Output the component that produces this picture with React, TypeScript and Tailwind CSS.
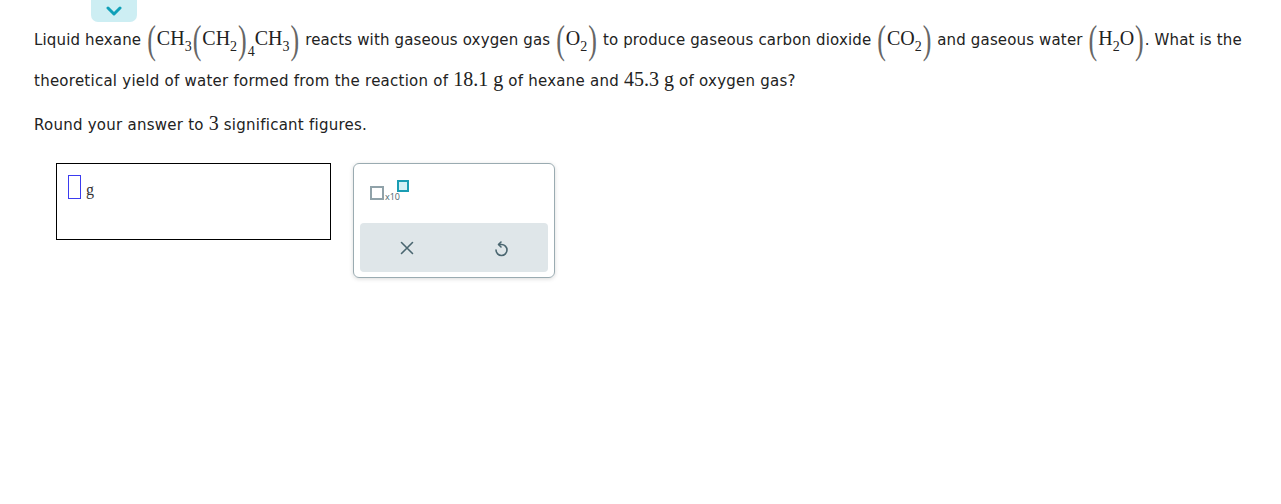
import React from "react";

const serif = { fontFamily: '"Liberation Serif", "Times New Roman", serif' };

function Paren({ ch }: { ch: string }) {
  return (
    <span
      className="inline-block text-[26px] text-[#666] scale-y-[1.5] align-[-4px] leading-none mx-[1px] tracking-normal"
      style={serif}
    >
      {ch}
    </span>
  );
}

function Sub({ c, big }: { c: string; big?: boolean }) {
  return (
    <span className={`text-[14px] relative ${big ? "top-[11px]" : "top-[6px]"}`}>{c}</span>
  );
}

function M({ children }: { children: React.ReactNode }) {
  return (
    <span className="text-[20px] text-[#222] tracking-normal" style={serif}>
      {children}
    </span>
  );
}

export default function App() {
  return (
    <div
      className="relative w-[1281px] h-[504px] bg-white text-[#222]"
      style={{ fontFamily: '"DejaVu Sans", Verdana, sans-serif' }}
    >
      <div className="absolute left-[91px] top-0 w-[46px] h-[22px] bg-[#cdeef3] rounded-b-[7px] flex items-center justify-center">
        <svg width="16" height="10" viewBox="0 0 16 10">
          <path d="M2 2 L8 8 L14 2" fill="none" stroke="#0fa0b8" strokeWidth="3" strokeLinecap="round" strokeLinejoin="round" />
        </svg>
      </div>

      <div className="pl-[34px] pt-[19px] pr-[10px] text-[15px] whitespace-nowrap">
        <p className="leading-[38px] tracking-[0.25px]">
          <span className="tracking-[0.15px]">
            Liquid hexane <Paren ch="(" />
            <M>
              CH<Sub c="3" />
            </M>
            <Paren ch="(" />
            <M>
              CH<Sub c="2" />
            </M>
            <Paren ch=")" />
            <M>
              <Sub c="4" big />
              CH<Sub c="3" />
            </M>
            <Paren ch=")" /> reacts with gaseous oxygen gas <Paren ch="(" />
            <M>
              O<Sub c="2" />
            </M>
            <Paren ch=")" /> to produce gaseous carbon dioxide <Paren ch="(" />
            <M>
              CO<Sub c="2" />
            </M>
            <Paren ch=")" /> and gaseous water <Paren ch="(" />
            <M>
              H<Sub c="2" />O
            </M>
            <Paren ch=")" />. What is the
          </span>
          <br />
          theoretical yield of water formed from the reaction of <M>18.1 g</M> of hexane and{" "}
          <M>45.3 g</M> of oxygen gas?
        </p>
        <p className="mt-[4px] leading-[38px] tracking-[0.25px]">
          Round your answer to <M>3</M> significant figures.
        </p>

        <div className="mt-[19px] ml-[22px] flex items-start gap-[22px]">
          <div className="w-[275px] h-[77px] border border-black pl-[11px] pt-[11px] flex items-start">
            <div className="w-[13px] h-[24px] border-[1.5px] border-[#3b3bf0]" />
            <span className="ml-[5px] mt-[3px] text-[16px] text-[#333]" style={serif}>
              g
            </span>
          </div>

          <div className="w-[202px] h-[115px] border border-[#9aabb1] rounded-[6px] shadow-[0_1px_4px_rgba(0,0,0,0.15)] px-[6px] pt-[16px] pb-[5px] flex flex-col">
            <div className="pl-[10px] h-[43px]">
              <div className="relative w-[44px] h-[28px]">
                <div className="absolute left-0 top-[6px] w-[14px] h-[14px] border-2 border-[#90a2a9]" />
                <span
                  className="absolute left-[15px] top-[12px] text-[9px] text-[#4a6670] leading-none"
                  style={{ fontFamily: '"Open Sans", sans-serif' }}
                >
                  x10
                </span>
                <div className="absolute left-[27px] top-0 w-[12px] h-[12px] border-2 border-[#1a9db3] bg-[#d3f0f5]" />
              </div>
            </div>
            <div className="flex-1 bg-[#dfe6e9] rounded-[4px] flex items-center justify-around">
              <svg width="14" height="14" viewBox="0 0 14 14">
                <path d="M1.5 1.5 L12.5 12.5 M12.5 1.5 L1.5 12.5" stroke="#4a6670" strokeWidth="1.6" strokeLinecap="round" />
              </svg>
              <svg width="16" height="18" viewBox="0 0 16 18">
                <path
                  d="M6 5.5 H8.5 A5.5 5.5 0 1 1 3 11"
                  fill="none"
                  stroke="#4a6670"
                  strokeWidth="1.6"
                  strokeLinecap="round"
                />
                <path d="M8 3 L5.5 5.5 L8 8" fill="none" stroke="#4a6670" strokeWidth="1.6" strokeLinecap="round" strokeLinejoin="round" />
              </svg>
            </div>
          </div>
        </div>
      </div>
    </div>
  );
}
